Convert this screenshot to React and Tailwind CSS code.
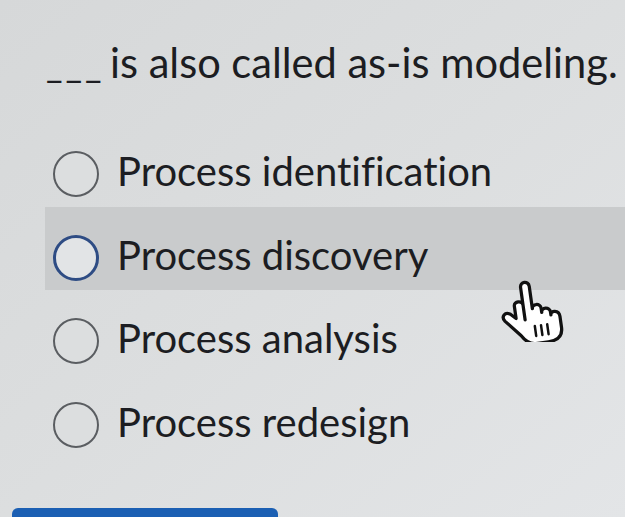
import React, { useState } from 'react';

const options = [
  'Process identification',
  'Process discovery',
  'Process analysis',
  'Process redesign',
];

const HandCursor = () => (
  <svg width="70" height="66" viewBox="4 0 56 52" className="absolute left-[494px] top-[276px]">
    <g transform="rotate(-8 33 28)">
      <path
        d="M28 34 L28 8 C28 3 35 3 35 8 L35 26 C35 22 42 22 42 27 L42 30 C42 26 49 26 49 31 L49 33 C49 29 56 30 56 35 L56 44 C56 51 52 54 44 54 L34 54 C29 54 26 51 23 46 L12 33 C9 29 13 25 17 28 L21 32 L21 22 C21 18 28 18 28 22 Z"
        fill="#ffffff"
        stroke="#111111"
        strokeWidth="2.6"
        strokeLinejoin="round"
      />
      <path d="M35 40 L35 48 M40 40 L40 48 M45 40 L45 48" stroke="#111" strokeWidth="2" strokeLinecap="round" />
    </g>
  </svg>
);

const Radio = ({ active }) => (
  <span
    className={
      active
        ? 'block w-[46px] h-[46px] rounded-full border-[3px] border-[#2e4c84] bg-[#e2e4e6] shrink-0'
        : 'block w-[46px] h-[46px] rounded-full border-2 border-[#5a5d61] bg-[#dcdedf] shrink-0'
    }
  />
);

export default function App() {
  const [hovered] = useState(1);

  return (
    <div
      className="relative w-[625px] h-[517px] overflow-hidden bg-gradient-to-br from-[#d6d8d9] via-[#dcdedf] to-[#e3e5e7] text-[#1c1d22] [font-variant-ligatures:none]"
      style={{ fontFamily: 'Lato, "Noto Sans", sans-serif' }}
    >
      <div className="pt-[36px] pl-[46px] text-[41.6px] leading-[52px]">
        <span className="inline-block w-[52px] text-[36px] tracking-[3px]">___</span>
        <span className="ml-[12px]">is also called as-is modeling.</span>
      </div>

      <ul className="mt-[33px] ml-[45px]">
        {options.map((label, i) => (
          <li
            key={label}
            className={
              i === hovered
                ? 'flex items-start h-[83px] pt-[28px] pl-[8px] gap-[18px] bg-[#c9cbcc]'
                : 'flex items-start h-[84px] pt-[28px] pl-[8px] gap-[18px]'
            }
          >
            <Radio active={i === hovered} />
            <span className="text-[40px] leading-[46px] -mt-[3px]">{label}</span>
          </li>
        ))}
      </ul>

      <HandCursor />

      <div className="absolute left-[12px] top-[508px] w-[266px] h-[20px] rounded-t-[6px] bg-[#1b5fb3]" />
    </div>
  );
}
